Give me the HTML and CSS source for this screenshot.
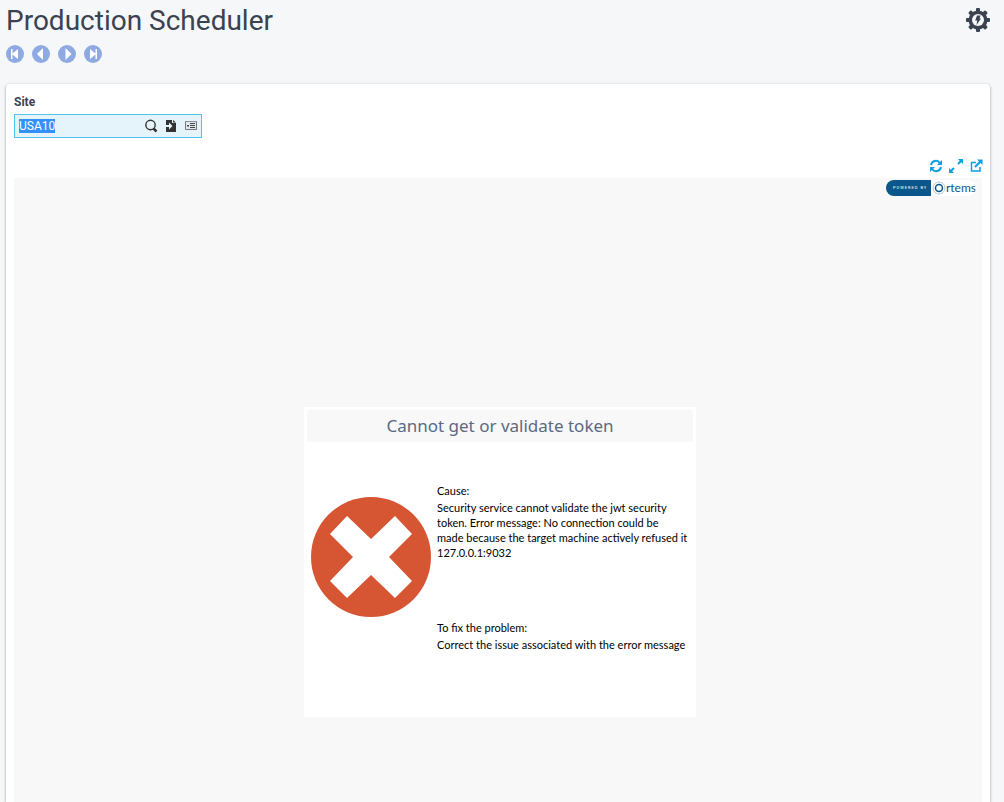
FILE: index.html
```
<!DOCTYPE html>
<html lang="en">

<head>
  <meta charset="UTF-8">
  <meta name="viewport" content="width=device-width, initial-scale=1.0">
  <title>Production Scheduler</title>
  <link rel="stylesheet" href="styles.css">
</head>

<body>
  <div class="page">
    <header class="page-header">
      <div>
        <h1 class="page-title">Production Scheduler</h1>
        <nav class="record-nav">
          <button type="button" class="nav-button" aria-label="First">
            <svg viewBox="0 0 18 18"><circle cx="9" cy="9" r="9"/><path d="M5 4h1.500v4.500L12 4v10L6.500 9.500V14H5z"/></svg>
          </button>
          <button type="button" class="nav-button" aria-label="Previous">
            <svg viewBox="0 0 18 18"><circle cx="9" cy="9" r="9"/><path d="M11 3v12L5 9z"/></svg>
          </button>
          <button type="button" class="nav-button" aria-label="Next">
            <svg viewBox="0 0 18 18"><circle cx="9" cy="9" r="9"/><path d="M7.500 3v12L13.500 9z"/></svg>
          </button>
          <button type="button" class="nav-button" aria-label="Last">
            <svg viewBox="0 0 18 18"><circle cx="9" cy="9" r="9"/><path d="M13 4h-1.500v4.500L6 4v10l5.500-4.500V14H13z"/></svg>
          </button>
        </nav>
      </div>
      <button type="button" class="settings" aria-label="Actions">
        <svg viewBox="-12 -12 24 24">
          <g fill="#3b4250">
            <rect x="-2" y="-12" width="4" height="24" rx="1"/>
            <rect x="-2" y="-12" width="4" height="24" rx="1" transform="rotate(45)"/>
            <rect x="-2" y="-12" width="4" height="24" rx="1" transform="rotate(90)"/>
            <rect x="-2" y="-12" width="4" height="24" rx="1" transform="rotate(135)"/>
            <circle r="9.500"/>
          </g>
          <circle r="6" fill="#f6f7f9"/>
          <path d="M-1-4.500h3.500L1.500-1.500H3L-1.500 5l.7-4.500h-2z" fill="#3b4250"/>
        </svg>
      </button>
    </header>

    <main class="panel">
      <label class="field-label" for="site">Site</label>
      <div class="field">
        <input class="field-input" id="site" type="text" value="USA10" autocomplete="off" spellcheck="false">
        <button type="button" class="field-button" aria-label="Search">
          <svg viewBox="0 0 14 14"><circle cx="6.500" cy="6" r="4.700" fill="none" stroke="#333" stroke-width="1.400"/><path d="M9.500 9.500l3 3" stroke="#333" stroke-width="2.500"/></svg>
        </button>
        <button type="button" class="field-button" aria-label="Go to">
          <svg viewBox="0 0 14 14"><path d="M2 1h6v3h4v9H2z" fill="#333"/><path d="M9 1l3 2.500H9z" fill="#333"/><path d="M2 6h3V3.500L8.500 7 5 10.500V8H2z" fill="#e5f4fb"/></svg>
        </button>
        <button type="button" class="field-button" aria-label="Details">
          <svg viewBox="0 0 14 14"><path d="M1.500 2.500h11v8h-11z" fill="#dfe9ee" stroke="#777"/><path d="M1 2.500h12" stroke="#8a8f99"/><path d="M6 4.500h5M6 6.500h5M6 8.500h5" stroke="#444"/><path d="M3 6h2v1.500H3z" fill="#444"/></svg>
        </button>
      </div>

      <div class="toolbar">
        <button type="button" class="tool" aria-label="Refresh">
          <svg viewBox="0 0 14 14"><path d="M2 6a5 5 0 0 1 9-2M12 8a5 5 0 0 1-9 2" fill="none" stroke="#0aa0e6" stroke-width="2"/><path d="M13 1v5H8zM1 13V8h5z" fill="#0aa0e6"/></svg>
        </button>
        <button type="button" class="tool" aria-label="Expand">
          <svg viewBox="0 0 14 14"><path d="M9 0h5v5zM0 9v5h5z" fill="#0aa0e6"/><path d="M12.500 1.500L9 5M1.500 12.500L5 9" stroke="#0aa0e6" stroke-width="2"/></svg>
        </button>
        <button type="button" class="tool" aria-label="Open in new window">
          <svg viewBox="0 0 14 14"><path d="M7 3.500H2.500v8.500H11V8" fill="none" stroke="#0aa0e6" stroke-width="1.500"/><path d="M8 0.500h5.500V6z" fill="#0aa0e6"/><path d="M11.500 2.500L6 8" stroke="#0aa0e6" stroke-width="2.200"/></svg>
        </button>
      </div>

      <div class="viewer">
        <div class="brand">
          <span class="brand-powered">POWERED BY</span>
          <span class="brand-name">
            <svg class="brand-mark" viewBox="0 0 14 14"><circle cx="7" cy="7" r="6" fill="none" stroke="#a8cbe0"/><circle cx="7" cy="7" r="3.500" fill="none" stroke="#0b568b" stroke-width="1.500"/></svg>rtems
          </span>
        </div>

        <section class="dialog">
          <h2 class="dialog-title">Cannot get or validate token</h2>
          <div class="dialog-body">
            <svg class="dialog-icon" viewBox="0 0 120 120">
              <circle cx="60" cy="60" r="60" fill="#d65532"/>
              <path d="M36 19l24 23 24-23 17 18-23 23 23 24-17 17-24-23-24 23-17-17 23-24-23-23z" fill="#fff"/>
            </svg>
            <div class="dialog-text">
              <div class="message cause">
                <h3>Cause:</h3>
                <p>Security service cannot validate the jwt security token. Error message: No connection could be<br>made because the target machine actively refused it 127.0.0.1:9032</p>
              </div>
              <div class="message">
                <h3>To fix the problem:</h3>
                <p>Correct the issue associated with the error message</p>
              </div>
            </div>
          </div>
        </section>
      </div>
    </main>
  </div>

  <script>
    document.getElementById("site").select();
  </script>
</body>

</html>
```

FILE: styles.css
```
* {
  margin: 0;
  padding: 0;
  box-sizing: border-box;
}

body {
  background-color: #f6f7f9;
  color: #3b4250;
  font-family: Roboto, sans-serif;
  font-size: 12px;
}

button {
  display: block;
  border: none;
  background: none;
}

svg {
  display: block;
  width: 100%;
  height: 100%;
}

.page {
  display: flex;
  flex-direction: column;
  height: 100vh;
  padding: 4px 14px 0 6px;
  overflow: hidden;
}

.page-header {
  display: flex;
  justify-content: space-between;
  align-items: flex-start;
  padding-bottom: 21px;
}

.page-title {
  font-size: 28px;
  font-weight: 400;
  line-height: 33px;
}

.record-nav {
  display: flex;
  gap: 8px;
  padding-top: 8px;
}

.nav-button {
  width: 18px;
  height: 18px;
}

.nav-button circle {
  fill: #8faae2;
}

.nav-button path {
  fill: #fff;
}

.settings {
  width: 24px;
  height: 24px;
  margin-top: 4px;
}

.panel {
  display: flex;
  flex: 1;
  flex-direction: column;
  min-height: 0;
  padding: 11px 8px 0;
  border-radius: 4px 4px 0 0;
  background-color: #fff;
  box-shadow: 0 1px 3px rgba(0, 0, 0, 0.4);
}

.field-label {
  font-weight: 700;
  line-height: 14px;
}

.field {
  display: flex;
  align-items: center;
  gap: 6px;
  width: 188px;
  height: 24px;
  margin-top: 5px;
  padding: 0 3px 0 4px;
  border: 1px solid #51c5ea;
  background-color: #e5f4fb;
}

.field-input {
  flex: 1;
  min-width: 0;
  border: none;
  outline: none;
  background: none;
  color: #3b4250;
  font-family: inherit;
  font-size: 12px;
}

.field-input::selection {
  background-color: #3390ff;
  color: #fff;
}

.field-button {
  width: 14px;
  height: 14px;
}

.toolbar {
  display: flex;
  justify-content: flex-end;
  gap: 6px;
  /* icons reach the edge of the viewer */
  margin-right: -1px;
  padding: 21px 0 5px;
}

.tool {
  width: 14px;
  height: 14px;
}

.viewer {
  display: flex;
  flex: 1;
  flex-direction: column;
  min-height: 0;
  padding: 2px 6px 0 10px;
  background-color: #f8f8f8;
}

.brand {
  display: flex;
  align-self: flex-end;
  flex-shrink: 0;
  width: 90px;
  height: 16px;
  overflow: hidden;
  border-radius: 8px;
  background-color: #fff;
}

.brand-powered {
  width: 46px;
  padding-left: 7px;
  background-color: #0b568b;
  color: #fff;
  font-size: 4px;
  letter-spacing: 1px;
  line-height: 16px;
}

.brand-name {
  display: flex;
  align-items: center;
  padding-left: 1px;
  color: #0b568b;
  font-family: Lato, sans-serif;
  font-size: 12px;
  line-height: 16px;
}

.brand-mark {
  width: 14px;
  height: 14px;
}

.dialog {
  flex-shrink: 0;
  align-self: center;
  width: 392px;
  height: 310px;
  margin-top: 211px;
  padding: 3px;
  background-color: #fff;
  color: #000;
}

.dialog-title {
  background-color: #f8f8f8;
  color: #5b6a84;
  font-family: "Noto Sans", sans-serif;
  font-size: 17px;
  font-weight: 400;
  line-height: 32px;
  text-align: center;
}

.dialog-body {
  display: flex;
  gap: 6px;
  padding: 41px 0 0 4px;
}

.dialog-icon {
  flex-shrink: 0;
  width: 120px;
  height: 120px;
  margin-top: 14px;
}

.dialog-text {
  flex: 1;
}

.message {
  font-family: Lato, sans-serif;
  font-size: 11px;
  line-height: 15px;
}

.message h3 {
  padding-bottom: 2px;
  font-size: 11px;
  font-weight: 400;
}

.cause {
  min-height: 137px;
}
```
